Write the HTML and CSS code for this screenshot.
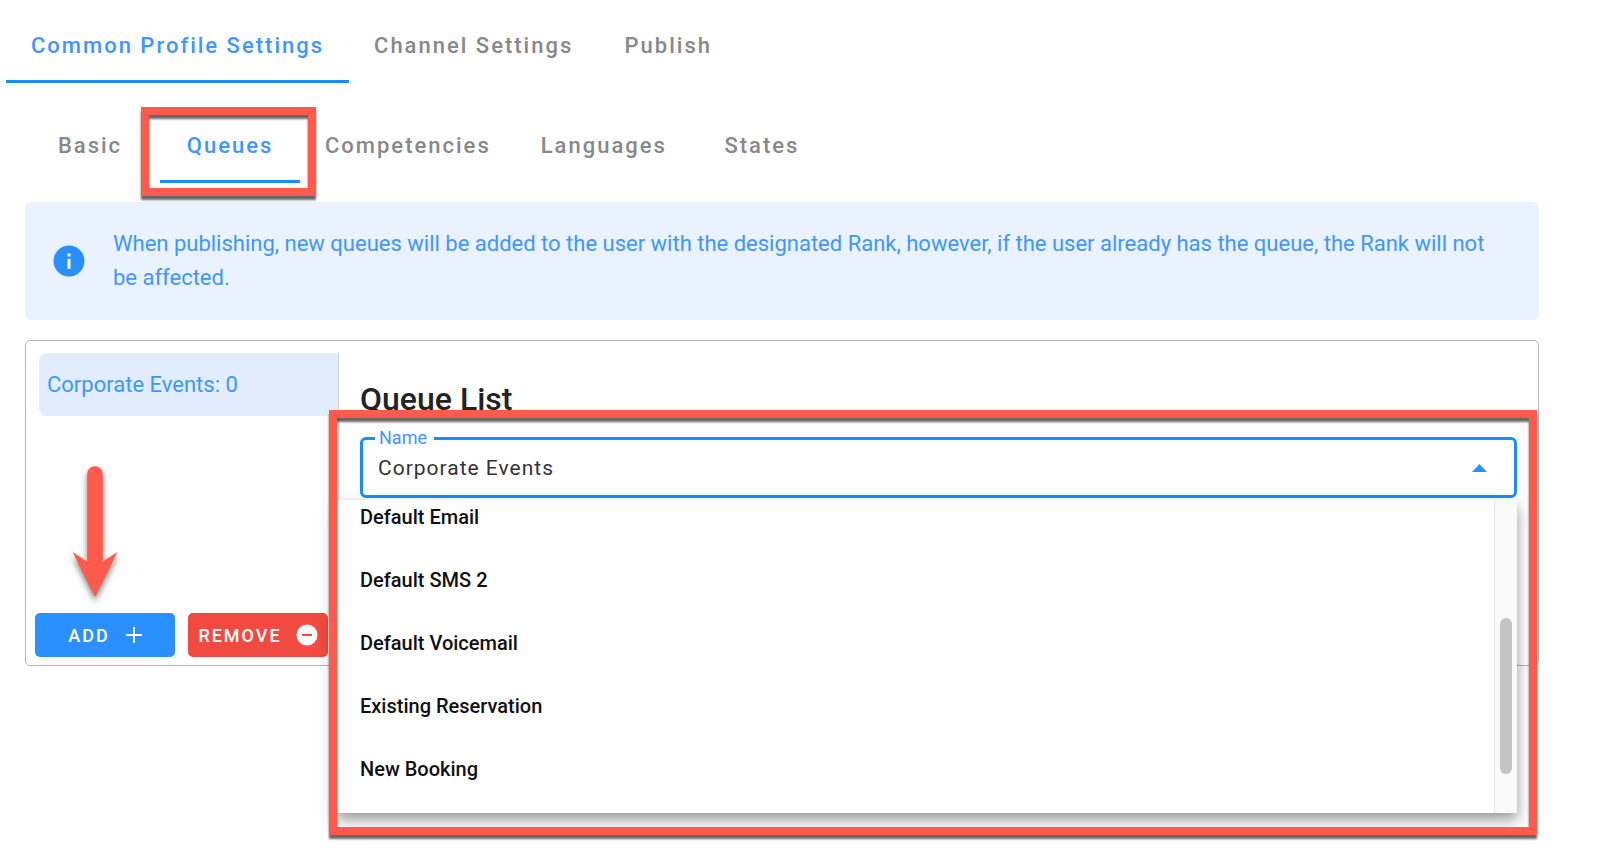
FILE: index.html
```html
<!DOCTYPE html>
<html lang="en">
<head>
  <meta charset="UTF-8">
  <meta name="viewport" content="width=device-width, initial-scale=1.0">
  <title>Common Profile Settings</title>
  <link rel="stylesheet" href="styles.css">
</head>
<body>
  <nav class="tabs">
    <a href="#common" class="tab active">Common Profile Settings</a>
    <a href="#channel" class="tab">Channel Settings</a>
    <a href="#publish" class="tab">Publish</a>
  </nav>

  <main class="page">
    <nav class="tabs sub-tabs">
      <a href="#basic" class="tab">Basic</a>
      <a href="#queues" class="tab active">Queues<span class="callout callout-tab"></span></a>
      <a href="#competencies" class="tab">Competencies</a>
      <a href="#languages" class="tab">Languages</a>
      <a href="#states" class="tab">States</a>
    </nav>

    <div class="alert">
      <svg class="alert-icon" viewBox="0 0 32 32" aria-hidden="true">
        <circle cx="16" cy="16" r="15.5" fill="#2b90ff"/>
        <path d="M14.5 8.5h3v3h-3zM14.5 14h3v10h-3z" fill="#fff"/>
      </svg>
      <p>When publishing, new queues will be added to the user with the designated Rank, however, if the user already has the queue, the Rank will not be affected.</p>
    </div>

    <section class="panel">
      <div class="sidebar">
        <ul class="queues">
          <li class="queue">Corporate Events: 0</li>
        </ul>
        <div class="actions">
          <button type="button" class="btn btn-add">ADD
            <svg width="16" height="16" viewBox="0 0 16 16" aria-hidden="true">
              <path d="M8 0v16M0 8h16" stroke="#fff" stroke-width="2"/>
            </svg>
          </button>
          <button type="button" class="btn btn-remove">REMOVE
            <svg width="22" height="22" viewBox="0 0 22 22" aria-hidden="true">
              <circle cx="11" cy="11" r="10.5" fill="#fff"/>
              <path d="M6 11h10" stroke="#f04a41" stroke-width="2"/>
            </svg>
          </button>
        </div>
        <svg class="arrow" width="46" height="132" viewBox="0 0 46 132" aria-hidden="true">
          <path d="M15.2 8a7.8 7.8 0 0 1 15.6 0V95.500L45.500 86 23 131 .500 86l14.700 9.500z" fill="#ff5a4c"/>
        </svg>
      </div>

      <div class="content">
        <h2>Queue List</h2>
        <div class="field">
          <fieldset>
            <legend><label for="name">Name</label></legend>
            <select id="name">
              <option>Corporate Events</option>
              <option>Default Email</option>
              <option>Default SMS 2</option>
              <option>Default Voicemail</option>
              <option>Existing Reservation</option>
              <option>New Booking</option>
            </select>
            <svg width="15" height="8" viewBox="0 0 15 8" aria-hidden="true">
              <path d="M0 8 7.500 0 15 8z" fill="#2b90ff"/>
            </svg>
          </fieldset>
          <div class="menu">
            <ul class="options">
              <li>Default Email</li>
              <li>Default SMS 2</li>
              <li>Default Voicemail</li>
              <li>Existing Reservation</li>
              <li>New Booking</li>
            </ul>
            <div class="scrollbar"><div class="thumb"></div></div>
          </div>
          <span class="callout callout-field"></span>
        </div>
      </div>
    </section>
  </main>
</body>
</html>
```
FILE: styles.css
```css
* {
  box-sizing: border-box;
}
body {
  min-height: 100vh;
  margin: 0;
  font-family: Roboto, sans-serif;
  font-size: 22px;
  color: #222;
  background: #fff;
}
ul, p, h2 {
  margin: 0;
  padding: 0;
  list-style: none;
}

/* tabs */
.tabs {
  display: flex;
  padding: 8px 6px 0;
}
.tab {
  position: relative;
  min-width: 140px;
  padding: 4px 25px 0;
  border-bottom: 3px solid transparent;
  font-weight: 500;
  letter-spacing: 2px;
  line-height: 68px;
  color: #888;
  text-align: center;
  text-decoration: none;
  white-space: nowrap;
}
.tab.active {
  color: #3d97ff;
  border-color: #1a8cff;
}
.page {
  padding: 0 61px 0 25px;
}
.sub-tabs {
  margin: 0 0 19px -5px;
  padding: 25px 0 0;
}

/* info message */
.alert {
  display: flex;
  align-items: center;
  gap: 28px;
  padding: 25px 28px;
  border-radius: 6px;
  background: #eaf2ff;
  color: #3d97ff;
  line-height: 34px;
}
.alert-icon {
  flex: none;
  width: 32px;
  height: 32px;
}

/* queues */
.panel {
  display: flex;
  min-height: 326px;
  margin-top: 20px;
  padding: 12px 0 8px 9px;
  border: 1px solid #b5b5b5;
  border-radius: 5px;
}
.sidebar {
  position: relative;
  display: flex;
  flex-direction: column;
  justify-content: space-between;
  width: 304px;
  border-right: 1px solid #d0d0d0;
}
.queue {
  margin-left: 4px;
  padding: 0 8px;
  border-radius: 8px 0 0 8px;
  background: #e1edfc;
  color: #3d97ff;
  line-height: 63px;
}
.actions {
  display: flex;
  gap: 13px;
}
.btn {
  display: flex;
  align-items: center;
  justify-content: center;
  width: 140px;
  height: 44px;
  padding: 0;
  border: none;
  border-radius: 5px;
  color: #fff;
  font-family: inherit;
  font-size: 18px;
  font-weight: 500;
  letter-spacing: 2px;
  cursor: pointer;
}
.btn-add {
  gap: 16px;
  background: #2b90ff;
}
.btn-remove {
  gap: 14px;
  background: #f04a41;
}
.content {
  flex: 1;
  padding: 28px 21px 0;
}
h2 {
  margin-bottom: 9px;
  font-size: 32px;
  font-weight: 500;
  line-height: 36px;
}

/* name select */
.field {
  position: relative;
}
fieldset {
  display: flex;
  align-items: center;
  margin: 0;
  padding: 0 27px 9px 12px;
  border: 3px solid #1a8cff;
  border-radius: 6px;
}
legend {
  padding: 0 7px 0 4px;
  color: #3d97ff;
  font-size: 18px;
  line-height: 24px;
}
select {
  flex: 1;
  height: 36px;
  padding: 0 3px;
  border: none;
  outline: none;
  appearance: none;
  background: none;
  color: #333;
  font-family: inherit;
  font-size: 21px;
  letter-spacing: 1px;
}
.menu {
  position: absolute;
  top: 74px;
  left: -24px;
  right: 0;
  display: flex;
  height: 313px;
  background: #fff;
  box-shadow: 0 8px 16px rgba(0, 0, 0, 0.3), 0 4px 8px rgba(0, 0, 0, 0.15);
}
.options {
  display: flex;
  flex: 1;
  flex-direction: column;
  justify-content: flex-end;
  padding: 0 24px 12px;
  overflow: hidden;
  color: #111;
  font-size: 20px;
  font-weight: 500;
  line-height: 63px;
}
.scrollbar {
  width: 23px;
  padding: 118px 5px 0;
  border-left: 1px solid #e8e8e8;
  background: #fafafa;
}
.thumb {
  height: 156px;
  border-radius: 6px;
  background: #c4c4c4;
}

/* annotations */
.callout {
  position: absolute;
  border: 8px solid #ff5a4c;
  filter: drop-shadow(0 4px 1px rgba(0, 0, 0, 0.6));
  pointer-events: none;
}
.callout-tab {
  top: -1px;
  left: -19px;
  right: -16px;
  height: 89px;
}
.callout-field {
  top: -16px;
  left: -31px;
  right: -20px;
  height: 425px;
}
.arrow {
  position: absolute;
  top: 113px;
  left: 37px;
  overflow: visible;
  filter: drop-shadow(0 4px 3px rgba(0, 0, 0, 0.5));
}
```
